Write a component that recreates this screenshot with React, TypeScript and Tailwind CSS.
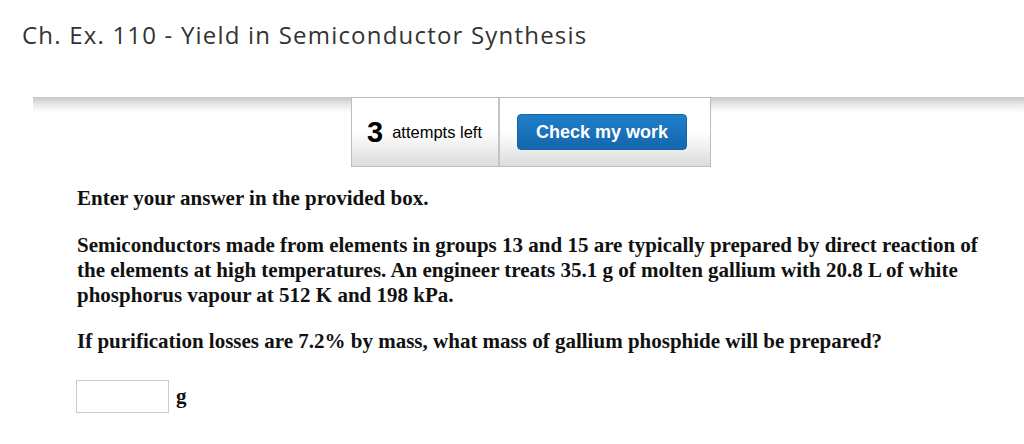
export default function App() {
  return (
    <div className="w-[1024px] h-[444px] bg-white overflow-hidden">
      <h1 className="pl-[22px] pt-[20px] text-[24px] leading-[30px] text-[#333] font-['Open_Sans',sans-serif] tracking-[1.2px]">
        Ch. Ex. 110 - Yield in Semiconductor Synthesis
      </h1>

      {/* attempts bar */}
      <div className="mt-[47px] ml-[33px] h-[70px] relative">
        <div className="absolute inset-x-0 top-0 h-[16px] bg-gradient-to-b from-[#c8c8c8] via-[#eaeaea] to-white" />
        <div className="relative ml-[318px] flex w-[360px] h-[70px] border border-[#bdbdbd]">
          <div className="w-[148px] flex items-center pl-[15px] gap-[9px] bg-gradient-to-b from-white via-white to-[#dcdcdc] border-r-2 border-[#c4c4c4] font-['Liberation_Sans',sans-serif] text-black">
            <span className="text-[29px] font-bold leading-none">3</span>
            <span className="text-[16.5px]">attempts left</span>
          </div>
          <div className="flex-1 flex items-center pl-[17px] bg-gradient-to-b from-white via-white to-[#dcdcdc]">
            <button className="w-[170px] h-[36px] rounded-[4px] bg-gradient-to-b from-[#1e7fcb] to-[#1566ad] border border-[#1862a8] text-white font-bold text-[18px] font-['Liberation_Sans',sans-serif]">
              Check my work
            </button>
          </div>
        </div>
      </div>

      <div className="pl-[77px] pt-[19px] w-[990px] font-['Liberation_Serif',serif] font-bold text-[21px] leading-[25px] text-[#111]">
        <p>Enter your answer in the provided box.</p>
        <p className="mt-[22px]">
          Semiconductors made from elements in groups 13 and 15 are typically prepared by direct reaction of the
          elements at high temperatures. An engineer treats 35.1 g of molten gallium with 20.8 L of white
          phosphorus vapour at 512 K and 198 kPa.
        </p>
        <p className="mt-[21px]">
          If purification losses are 7.2% by mass, what mass of gallium phosphide will be prepared?
        </p>
        <div className="mt-[26px] flex items-center gap-[7px] ml-[-1px]">
          <input className="w-[93px] h-[33px] border border-[#cccccc] outline-none" />
          <span>g</span>
        </div>
      </div>
    </div>
  );
}
